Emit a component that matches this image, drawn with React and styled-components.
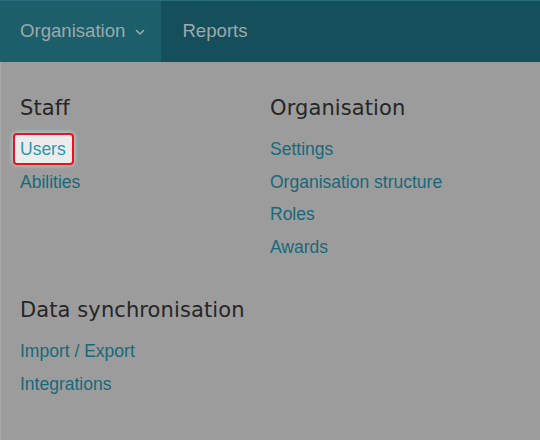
import React from "react";
import styled, { createGlobalStyle } from "styled-components";

const Global = createGlobalStyle`
  html, body { margin: 0; padding: 0; }
  body {
    width: 540px;
    height: 440px;
    overflow: hidden;
    background: #9c9c9c;
    font-family: "Liberation Sans", Arial, sans-serif;
  }
`;

const Page = styled.div`
  width: 540px;
  height: 440px;
  display: flex;
  flex-direction: column;
  background: #9c9c9c;
`;

const NavBar = styled.nav`
  height: 62px;
  flex: none;
  display: flex;
  align-items: stretch;
  background: #154f5b;
  border-top: 1px solid #2a6e7d;
  box-sizing: border-box;
`;

const NavTab = styled.div`
  display: flex;
  align-items: center;
  gap: 10px;
  padding: 0 ${(p) => (p.$open ? "16px" : "20px")} 1px ${(p) => (p.$open ? "20px" : "21px")};
  background: ${(p) => (p.$open ? "#1c5e69" : "transparent")};
  color: #9ea9ab;
  font-size: 18.6px;
`;

const Chevron = () => (
  <svg width="10" height="7" viewBox="0 0 10 7" style={{ marginTop: 2 }}>
    <path d="M1.5 1.5 L5 5 L8.5 1.5" fill="none" stroke="#9ea9ab" strokeWidth="1.6" strokeLinecap="round" strokeLinejoin="round" />
  </svg>
);

const Panel = styled.div`
  flex: 1;
  display: grid;
  grid-template-columns: 250px 250px;
  align-content: start;
  row-gap: 37.5px;
  padding: 32px 0 0 19px;
  border-left: 1px solid #a9a9a9;
`;

const Section = styled.section`
  display: flex;
  flex-direction: column;
`;

const Heading = styled.h3`
  margin: 0 0 15px;
  font-family: "DejaVu Sans", sans-serif;
  font-weight: 400;
  font-size: 21px;
  line-height: 28px;
  color: #262626;
  letter-spacing: 0.1px;
`;

const LinkList = styled.div`
  display: flex;
  flex-direction: column;
  align-items: flex-start;
  gap: 8.5px;
`;

const MenuLink = styled.a`
  font-size: 17.5px;
  line-height: 24px;
  color: ${(p) => (p.$focused ? "#2499b0" : "#17697a")};
  text-decoration: none;
  position: relative;
  &::before {
    content: "";
    display: ${(p) => (p.$focused ? "block" : "none")};
    position: absolute;
    left: -7px;
    right: -8px;
    top: -4px;
    bottom: -4px;
    border: 2px solid #e8141b;
    border-radius: 4px;
    background: #ececec;
    box-shadow: 0 0 5px rgba(255, 255, 255, 0.6);
    z-index: 0;
  }
`;

const LinkText = styled.span`
  position: relative;
  z-index: 1;
`;

const sections = [
  { title: "Staff", links: ["Users", "Abilities"] },
  { title: "Organisation", links: ["Settings", "Organisation structure", "Roles", "Awards"] },
  { title: "Data synchronisation", links: ["Import / Export", "Integrations"] },
];

export default function App() {
  return (
    <>
      <Global />
      <Page>
        <NavBar>
          <NavTab $open>
            Organisation
            <Chevron />
          </NavTab>
          <NavTab>Reports</NavTab>
        </NavBar>
        <Panel>
          {sections.map((s) => (
            <Section key={s.title}>
              <Heading>{s.title}</Heading>
              <LinkList>
                {s.links.map((l) => (
                  <MenuLink key={l} href="#" $focused={l === "Users"}>
                    <LinkText>{l}</LinkText>
                  </MenuLink>
                ))}
              </LinkList>
            </Section>
          ))}
        </Panel>
      </Page>
    </>
  );
}
